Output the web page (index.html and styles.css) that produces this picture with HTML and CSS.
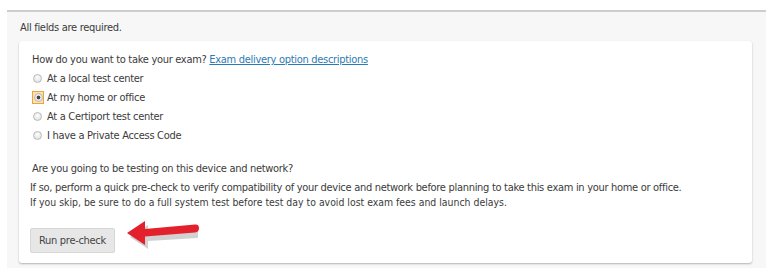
FILE: index.html
```html
<!DOCTYPE html>
<html lang="en">
<head>
    <meta charset="UTF-8">
    <meta name="viewport" content="width=device-width, initial-scale=1.0">
    <title>Exam delivery</title>
    <link rel="stylesheet" href="styles.css">
</head>
<body>
    <div class="panel">
        <p class="required">All fields are required.</p>

        <div class="card">
            <form class="delivery">
                <p class="question">How do you want to take your exam? <a href="#">Exam delivery option descriptions</a></p>

                <label class="option"><span class="radio"></span>At a local test center</label>
                <label class="option"><span class="focus"><span class="radio checked"></span></span>At my home or office</label>
                <label class="option"><span class="radio"></span>At a Certiport test center</label>
                <label class="option"><span class="radio"></span>I have a Private Access Code</label>
            </form>

            <p class="question device">Are you going to be testing on this device and network?</p>
            <p class="note">If so, perform a quick pre-check to verify compatibility of your device and network before planning to take this exam in your home or office.</p>
            <p class="note small">If you skip, be sure to do a full system test before test day to avoid lost exam fees and launch delays.</p>

            <div class="actions">
                <button type="button" class="btn">Run pre-check</button>
                <svg class="arrow" width="80" height="30" viewBox="0 0 80 30">
                    <!-- shadow -->
                    <path d="M4 16 L22 4 L22 12 L72 8 L72 17 L22 20 L22 28 Z" fill="rgba(0,0,0,0.18)" transform="translate(1,2)"/>
                    <path d="M2 14 L20 2 L20 10 L70 5.5 Q74 5 74 9 Q74 13 70 13.5 L20 17.5 L20 26 Z" fill="#e3212d"/>
                </svg>
            </div>
        </div>
    </div>
</body>
</html>
```

FILE: styles.css
```css
* {
    box-sizing: border-box;
}

body {
    margin: 0;
    background-color: #ffffff;
    color: #3b3b3b;
    font-family: 'DejaVu Sans Condensed', 'DejaVu Sans', sans-serif;
    font-size: 11px;
    letter-spacing: -0.3px;
}

p {
    margin: 0;
}

.panel {
    margin: 10px 2px 0 7px;
    border-top: 2px solid #cdcdcd;
    background-color: #f7f7f7;
    padding: 6px 14px 5px 12px;
}

.required {
    line-height: 19px;
    margin-left: 1px;
}

.card {
    margin-top: 4px;
    background-color: #fff;
    border-radius: 3px;
    box-shadow: 0 1px 2px rgba(0, 0, 0, 0.28);
    padding: 9px 11px 10px 11px;
}

.question {
    line-height: 19px;
    margin-left: 2px;
}

.question a {
    color: #2b7bb5;
    text-decoration: underline;
}

.option {
    display: flex;
    align-items: center;
    height: 19px;
    padding-left: 3px;
}

.radio {
    width: 9px;
    height: 9px;
    border-radius: 50%;
    border: 1px solid #b9b9b9;
    background: radial-gradient(circle at 50% 35%, #fdfdfd, #dcdcdc);
    margin-right: 5px;
    flex: none;
}

.radio.checked {
    background: radial-gradient(circle, #444 0 1.6px, #e9e9e9 2.2px);
    margin-right: 0;
}

.focus {
    display: flex;
    align-items: center;
    justify-content: center;
    width: 12px;
    height: 13px;
    margin-left: -1px;
    margin-right: 3px;
    border: 1px solid #f0a33a;
    background-color: #fde3b4;
}

.device {
    margin-top: 14px;
}

.note {
    margin-top: 1px;
    line-height: 17px;
}

.note.small {
    margin-top: 0;
    font-size: 10.4px;
    line-height: 12px;
    letter-spacing: 0;
}

.actions {
    display: flex;
    align-items: center;
    margin-top: 20px;
}

.btn {
    width: 85px;
    height: 25px;
    font-family: inherit;
    font-size: 11px;
    letter-spacing: inherit;
    color: #444;
    background-color: #e7e7e7;
    border: 1px solid #d6d6d6;
    border-radius: 2px;
    text-align: left;
    padding: 0 0 0 8px;
}

.arrow {
    margin-left: 10px;
    margin-top: -13px;
}
```
